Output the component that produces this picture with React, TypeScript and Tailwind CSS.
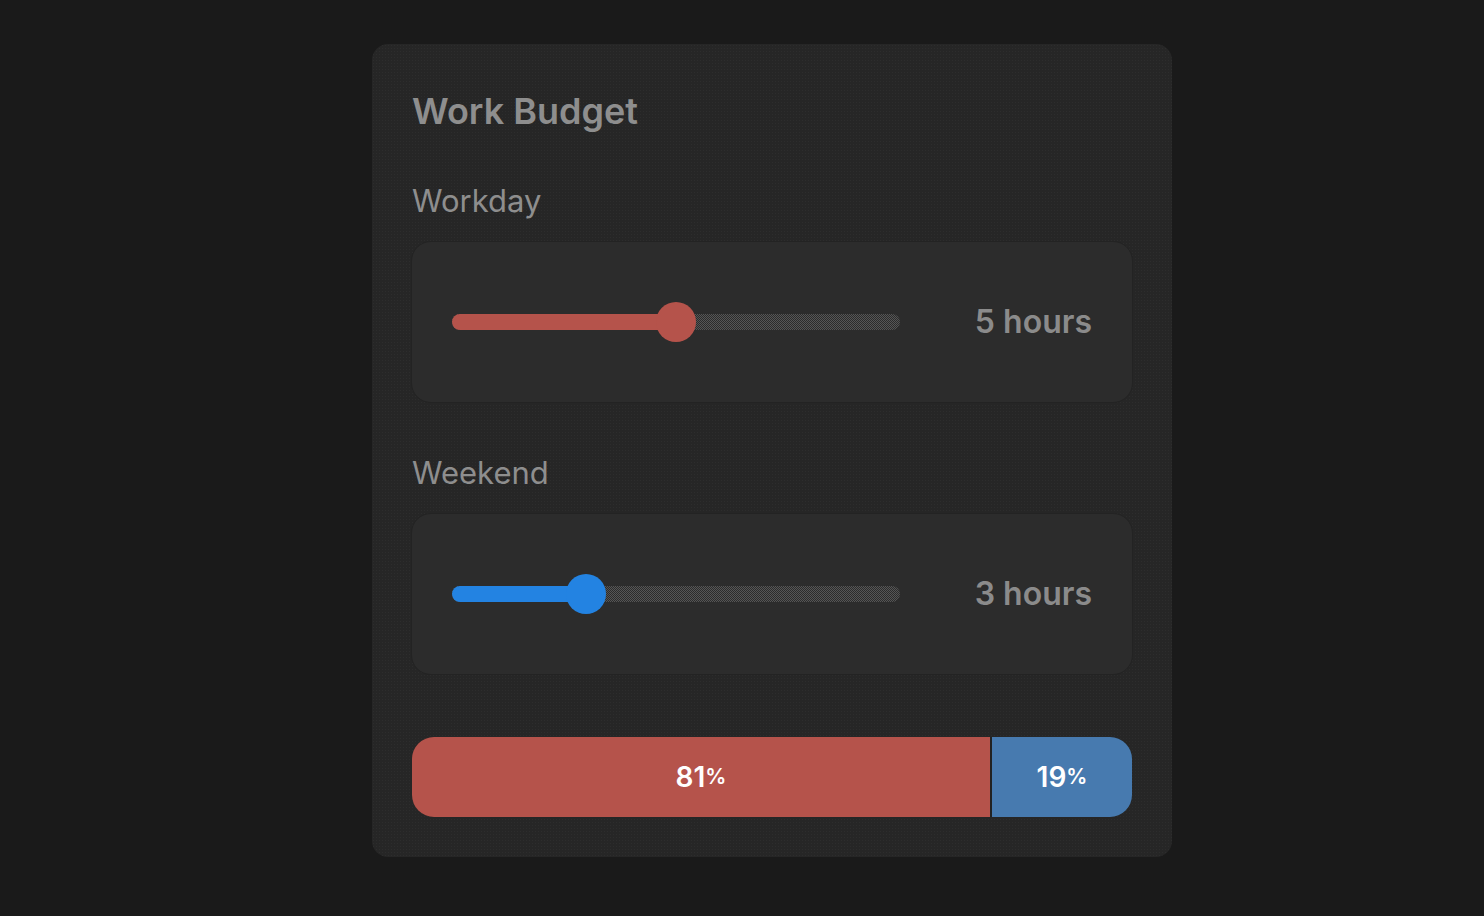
import React from "react";

function Slider({ pct, color }: { pct: number; color: string }) {
  return (
    <div className="relative h-10 w-[448px] flex items-center">
      <div className="h-4 w-full rounded-full bg-[repeating-conic-gradient(#565656_0_25%,#2c2c2c_0_50%)] bg-[length:2px_2px]" />
      <div
        className={`absolute left-0 top-1/2 -translate-y-1/2 h-4 rounded-full ${color}`}
        style={{ width: `${pct}%` }}
      />
      <div
        className={`absolute top-0 h-10 w-10 -translate-x-1/2 rounded-full ${color}`}
        style={{ left: `${pct}%` }}
      />
    </div>
  );
}

function Panel({ pct, color, value }: { pct: number; color: string; value: string }) {
  return (
    <div className="-mx-px flex items-center justify-between rounded-[20px] border border-[#232323] bg-[#2c2c2c] px-[40px] py-[60px]">
      <Slider pct={pct} color={color} />
      <div className="text-[32px] leading-[40px] font-semibold text-[#8b8b8b]">{value}</div>
    </div>
  );
}

export default function App() {
  return (
    <div
      className="min-h-screen bg-[#1a1a1a] pt-[44px]"
      style={{ fontFamily: "Inter, 'Noto Sans', sans-serif" }}
    >
      <div className="ml-[372px] w-[800px] rounded-[16px] bg-[#262626] bg-[radial-gradient(circle,#2d2d2d_0.8px,transparent_1px)] bg-[length:3px_3px] p-10">
        <h1 className="text-[36px] leading-[54px] font-semibold text-[#8e8e8e]">Work Budget</h1>
        <div className="mt-10 mb-[18px] text-[31px] leading-[45px] text-[#8e8e8e]">Workday</div>
        <Panel pct={50} color="bg-[#b5534b]" value="5 hours" />
        <div className="mt-[47px] mb-[18px] text-[31px] leading-[45px] text-[#8e8e8e]">Weekend</div>
        <Panel pct={30} color="bg-[#2383e2]" value="3 hours" />
        <div className="mt-[62px] flex h-20 overflow-hidden rounded-[22px] bg-[#222222] gap-[2px]">
          <div className="flex w-[578px] items-center justify-center bg-[#b5534b] text-white font-semibold">
            <span className="text-[28px]">81</span>
            <span className="text-[21px]">%</span>
          </div>
          <div className="flex flex-1 items-center justify-center bg-[#477aaf] text-white font-semibold">
            <span className="text-[28px]">19</span>
            <span className="text-[21px]">%</span>
          </div>
        </div>
      </div>
    </div>
  );
}
